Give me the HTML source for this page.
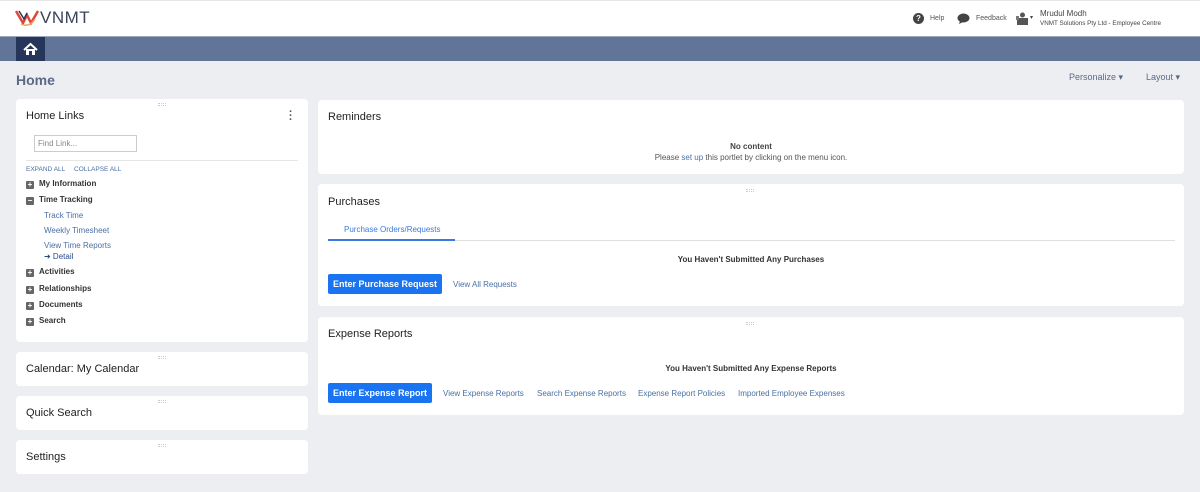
<!DOCTYPE html>
<html><head><style>
*{box-sizing:border-box;margin:0;padding:0}
body{width:1200px;height:492px;background:#edeef2;font-family:"Liberation Sans",sans-serif;position:relative;overflow:hidden;color:#333}
.abs{position:absolute}
.hdr{left:0;top:0;width:1200px;height:36px;background:#fff;border-top:1px solid #e6e6e6}
.nav{left:0;top:36px;width:1200px;height:25px;background:#607597;border-top:1px solid #9aa7bd}
.homebtn{left:16px;top:37px;width:29px;height:24px;background:#25365a}
.panel{position:absolute;background:#fff;border-radius:4px}
.pt{position:absolute;left:10px;font-size:11px;color:#222}
.lnk{color:#4a6fa5}
.btn{position:absolute;background:#1a73f0;color:#fff;font-size:9px;font-weight:bold;border-radius:2px;text-align:center;line-height:20px}
.tree{position:absolute;left:10px;font-size:8px;font-weight:bold;color:#333}
.box{display:inline-block;width:8px;height:8px;background:#666;border-radius:1px;margin-right:5px;vertical-align:-1px;position:relative;color:#fff;font-size:8px;line-height:8px;text-align:center;font-weight:bold}
.sub{position:absolute;left:44px;font-size:8px;color:#4a6fa5}
.grip{position:absolute;width:8px;height:3px;border-top:1px dotted #ccc;border-bottom:1px dotted #ccc}
</style></head><body>
<div class="abs hdr"></div>
<svg class="abs" style="left:15px;top:9px" width="24" height="18" viewBox="0 0 24 18"><path d="M1 2 L8 14 L12 6 L16 14 L23 2" fill="none" stroke="#e0463a" stroke-width="2.5"/><path d="M4 2 L9 10 L12 4" fill="none" stroke="#2a3550" stroke-width="1.5"/><path d="M6 15 Q14 19 20 10" fill="none" stroke="#f0a060" stroke-width="1.5"/></svg>
<div class="abs" style="left:40px;top:8px;font-size:17px;color:#3a4458;letter-spacing:0.5px">VNMT</div>
<div class="abs" style="left:913px;top:13px;width:11px;height:11px;border-radius:50%;background:#444;color:#fff;font-size:8px;font-weight:bold;text-align:center;line-height:11px">?</div>
<div class="abs" style="left:930px;top:15px;font-size:7px;color:#555">Help</div>
<svg class="abs" style="left:957px;top:13px" width="13" height="12" viewBox="0 0 13 12"><ellipse cx="6.5" cy="5" rx="6" ry="4.5" fill="#444"/><path d="M3 8 L2 11 L6 9 Z" fill="#444"/></svg>
<div class="abs" style="left:976px;top:15px;font-size:7px;color:#555">Feedback</div>
<svg class="abs" style="left:1016px;top:12px" width="13" height="13" viewBox="0 0 13 13"><circle cx="6.5" cy="3" r="2.5" fill="#555"/><rect x="1" y="6" width="11" height="7" fill="#555"/><rect x="0" y="4" width="3" height="4" fill="#777"/></svg>
<div class="abs" style="left:1030px;top:14px;font-size:6px;color:#444">▾</div>
<div class="abs" style="left:1040px;top:9px;font-size:8px;color:#444">Mrudul Modh</div>
<div class="abs" style="left:1040px;top:20px;font-size:6.3px;color:#444">VNMT Solutions Pty Ltd - Employee Centre</div>
<div class="abs nav"></div>
<div class="abs homebtn"><svg width="29" height="24" viewBox="0 0 29 24"><path d="M8 13 L14.5 7 L21 13" fill="none" stroke="#fff" stroke-width="2"/><path d="M10 12 V18 H19 V12 Z" fill="#fff"/><rect x="13" y="14" width="3" height="4" fill="#25365a"/></svg></div>
<div class="abs" style="left:16px;top:72px;font-size:14px;font-weight:bold;color:#5a6a85">Home</div>
<div class="abs" style="left:1069px;top:72px;font-size:9px;color:#5a6a85">Personalize ▾</div>
<div class="abs" style="left:1146px;top:72px;font-size:9px;color:#5a6a85">Layout ▾</div>

<div class="panel" style="left:16px;top:99px;width:292px;height:243px">
 <div class="grip" style="left:142px;top:4px"></div>
 <div class="pt" style="top:11px;font-size:11px">Home Links</div>
 <div class="abs" style="left:273px;top:11px;font-size:11px;color:#555;font-weight:bold;line-height:4px">·<br>·<br>·</div>
 <div class="abs" style="left:18px;top:36px;width:103px;height:17px;border:1px solid #ccc;font-size:8px;color:#888;padding:3px 3px">Find Link...</div>
 <div class="abs" style="left:10px;top:61px;width:272px;border-top:1px solid #e5e5e5"></div>
 <div class="abs lnk" style="left:10px;top:67px;font-size:6.5px">EXPAND ALL &nbsp;&nbsp;&nbsp;&nbsp;COLLAPSE ALL</div>
 <div class="tree" style="top:80px"><span class="box">+</span>My Information</div>
 <div class="tree" style="top:96px"><span class="box">−</span>Time Tracking</div>
 <div class="sub" style="left:28px;top:112px">Track Time</div>
 <div class="sub" style="left:28px;top:127px">Weekly Timesheet</div>
 <div class="sub" style="left:28px;top:142px">View Time Reports</div>
 <div class="sub" style="left:28px;top:153px;color:#2a4a8a">➜ Detail</div>
 <div class="tree" style="top:168px"><span class="box">+</span>Activities</div>
 <div class="tree" style="top:185px"><span class="box">+</span>Relationships</div>
 <div class="tree" style="top:201px"><span class="box">+</span>Documents</div>
 <div class="tree" style="top:217px"><span class="box">+</span>Search</div>
</div>
<div class="panel" style="left:16px;top:352px;width:292px;height:34px"><div class="grip" style="left:142px;top:4px"></div><div class="pt" style="top:11px">Calendar: My Calendar</div></div>
<div class="panel" style="left:16px;top:396px;width:292px;height:34px"><div class="grip" style="left:142px;top:4px"></div><div class="pt" style="top:11px">Quick Search</div></div>
<div class="panel" style="left:16px;top:440px;width:292px;height:34px"><div class="grip" style="left:142px;top:4px"></div><div class="pt" style="top:11px">Settings</div></div>

<div class="panel" style="left:318px;top:100px;width:866px;height:74px">
 <div class="pt" style="top:11px">Reminders</div>
 <div class="abs" style="left:0;width:866px;top:42px;text-align:center;font-size:8px;font-weight:bold;color:#444">No content</div>
 <div class="abs" style="left:0;width:866px;top:53px;text-align:center;font-size:8px;color:#555">Please <span class="lnk">set up</span> this portlet by clicking on the menu icon.</div>
</div>
<div class="panel" style="left:318px;top:184px;width:866px;height:122px">
 <div class="grip" style="left:428px;top:5px"></div>
 <div class="pt" style="top:12px">Purchases</div>
 <div class="abs" style="left:26px;top:41px;font-size:8px;color:#3a7ae0">Purchase Orders/Requests</div>
 <div class="abs" style="left:10px;top:56px;width:847px;border-top:1px solid #e0e0e0"></div>
 <div class="abs" style="left:10px;top:55px;width:127px;border-top:2px solid #3a7ae0"></div>
 <div class="abs" style="left:0;width:866px;top:71px;text-align:center;font-size:8px;font-weight:bold;color:#333">You Haven't Submitted Any Purchases</div>
 <div class="btn" style="left:10px;top:90px;width:114px">Enter Purchase Request</div>
 <div class="abs lnk" style="left:135px;top:96px;font-size:8px">View All Requests</div>
</div>
<div class="panel" style="left:318px;top:317px;width:866px;height:98px">
 <div class="grip" style="left:428px;top:5px"></div>
 <div class="pt" style="top:11px">Expense Reports</div>
 <div class="abs" style="left:0;width:866px;top:47px;text-align:center;font-size:8px;font-weight:bold;color:#333">You Haven't Submitted Any Expense Reports</div>
 <div class="btn" style="left:10px;top:66px;width:104px">Enter Expense Report</div>
 <div class="abs lnk" style="left:125px;top:72px;font-size:8px">View Expense Reports</div>
 <div class="abs lnk" style="left:219px;top:72px;font-size:8px">Search Expense Reports</div>
 <div class="abs lnk" style="left:320px;top:72px;font-size:8px">Expense Report Policies</div>
 <div class="abs lnk" style="left:420px;top:72px;font-size:8px">Imported Employee Expenses</div>
</div>
</body></html>
